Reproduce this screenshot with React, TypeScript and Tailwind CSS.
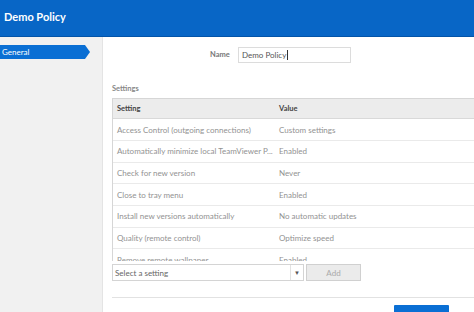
const ROWS: Array<[string, string]> = [
  ["Access Control (outgoing connections)", "Custom settings"],
  ["Automatically minimize local TeamViewer P...", "Enabled"],
  ["Check for new version", "Never"],
  ["Close to tray menu", "Enabled"],
  ["Install new versions automatically", "No automatic updates"],
  ["Quality (remote control)", "Optimize speed"],
  ["Remove remote wallpaper", "Enabled"],
];

export default function App() {
  return (
    <div
      className="flex h-[312px] w-[474px] flex-col overflow-hidden bg-white"
      style={{ fontFamily: 'Lato, "Open Sans", sans-serif' }}
    >
      {/* Title bar */}
      <div className="flex h-[37px] shrink-0 items-center border-b border-[#0354a8] bg-[#0866c6] pl-[4px] pb-[1px]">
        <span className="text-[11px] font-bold text-white">Demo Policy</span>
      </div>

      <div className="flex flex-1">
        {/* Sidebar */}
        <div className="w-[103px] shrink-0 border-r border-[#e4e4e4] bg-[#f1f1f1] pt-[8px]">
          <div className="relative h-[14px] w-[85px] bg-[#0a6fd4] pl-[2px] text-[8px] leading-[14px] text-white">
            General
            <span className="absolute right-[-5px] top-0 h-0 w-0 border-y-[7px] border-l-[5px] border-y-transparent border-l-[#0a6fd4]" />
          </div>
        </div>

        {/* Main */}
        <div className="flex flex-1 flex-col pl-[9px]">
          <div className="mt-[10px] flex items-center pl-[98px]">
            <span className="w-[28px] text-[7.5px] font-bold text-[#777]">Name</span>
            <div className="flex h-[16px] w-[113px] items-center border border-[#dcdcdc] pl-[3px] text-[8px] text-[#555]">
              Demo Policy<span className="ml-[1px] h-[10px] w-px bg-[#333]" />
            </div>
          </div>

          <div className="mt-[20px] text-[7.5px] font-bold text-[#888]">Settings</div>

          <div className="mt-[4px] h-[163px] overflow-hidden border-l border-t border-[#d6d6d6]">
            <div className="flex h-[20px] items-center border-b border-[#d9d9d9] bg-[#ececec] text-[7.5px] font-bold text-[#444]">
              <span className="w-[166px] pl-[4px]">Setting</span>
              <span>Value</span>
            </div>
            {ROWS.map(([s, v]) => (
              <div
                key={s}
                className="flex h-[21.7px] shrink-0 items-center border-b border-[#eaeaea] text-[8px] text-[#929292]"
              >
                <span className="w-[166px] whitespace-nowrap pl-[4px]">{s}</span>
                <span>{v}</span>
              </div>
            ))}
          </div>

          <div className="mt-[3px] flex items-center gap-[2px]">
            <div className="flex h-[17px] w-[192px] items-center border border-[#d4d4d4] text-[8px] text-[#666]">
              <span className="flex-1 pl-[2px]">Select a setting</span>
              <span className="flex h-full w-[13px] items-center justify-center border-l border-[#e2e2e2] text-[6px] text-[#555]">
                ▼
              </span>
            </div>
            <div className="flex h-[17px] w-[55px] items-center justify-center border border-[#d0d0d0] bg-[#ebebeb] text-[8px] text-[#aaa]">
              Add
            </div>
          </div>

          <div className="mt-[16px] h-px bg-[#e2e2e2]" />

          <div className="mt-[7px] flex pl-[282px]">
            <div className="h-[10px] w-[55px] rounded-[1px] bg-[#0a6fd4]" />
          </div>
        </div>
      </div>
    </div>
  );
}
